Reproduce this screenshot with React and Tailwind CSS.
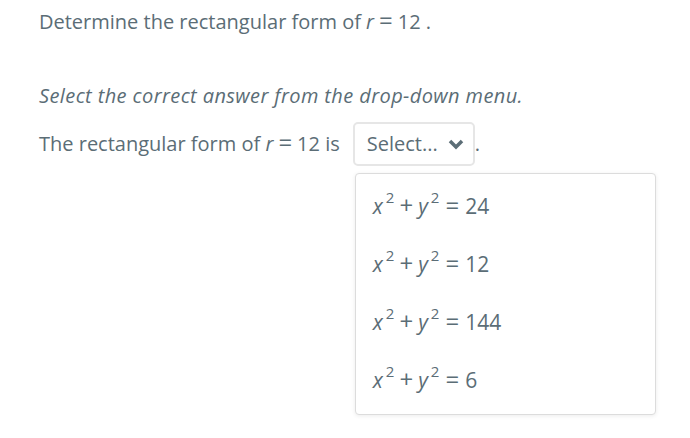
const font = { fontFamily: '"Open Sans", "Liberation Sans", sans-serif' };

function V({ children }) {
  return <i className="italic">{children}</i>;
}

function Op({ children, className = '' }) {
  return <span className={`text-[24px] leading-none ${className}`}>{children}</span>;
}

function Eq({ rhs }) {
  return (
    <span className="whitespace-nowrap text-[21px] leading-[28px]">
      <V>x</V>
      <sup className="text-[15px] ml-[3px] -top-[0.75em]">2</sup>
      <Op className="mx-[5px]">+</Op>
      <V>y</V>
      <sup className="text-[15px] ml-[3px] -top-[0.75em]">2</sup>
      <Op className="mx-[6px]">=</Op>
      {rhs}
    </span>
  );
}

const options = ['24', '12', '144', '6'];

export default function App() {
  return (
    <div className="w-[690px] h-[438px] bg-white text-[#5b6d76] text-[20px]" style={font}>
      <div className="pl-[39px] pt-[8px]">
        <p className="leading-[28px]">
          Determine the rectangular form of <V>r</V>
          <Op className="mx-[5px]">=</Op>12 .
        </p>
        <p className="italic leading-[28px] mt-[46px] tracking-[0.4px]">
          Select the correct answer from the drop-down menu.
        </p>
        <div className="flex items-center mt-[12px]">
          <span>
            The rectangular form of <V>r</V>
            <Op className="mx-[5px]">=</Op>12 is
          </span>
          <div className="relative ml-[13px]">
            <div className="flex items-center gap-[9px] h-[44px] pl-[12px] pr-[8px] border-2 border-[#e6e6e6] rounded-[5px]">
              <span>Select...</span>
              <svg width="18" height="14" viewBox="0 0 18 14">
                <path d="M3 4 L9 10 L15 4" fill="none" stroke="#5b6d76" strokeWidth="3.5" />
              </svg>
            </div>
            <div className="absolute left-[2px] top-[51px] w-[301px] h-[242px] bg-white border border-[#dcdcdc] rounded-[4px] shadow-[0_1px_4px_rgba(0,0,0,0.08)] pt-[3px]">
              {options.map((o) => (
                <div key={o} className="h-[58px] flex items-center pl-[17px]">
                  <Eq rhs={o} />
                </div>
              ))}
            </div>
          </div>
          <span>.</span>
        </div>
      </div>
    </div>
  );
}
